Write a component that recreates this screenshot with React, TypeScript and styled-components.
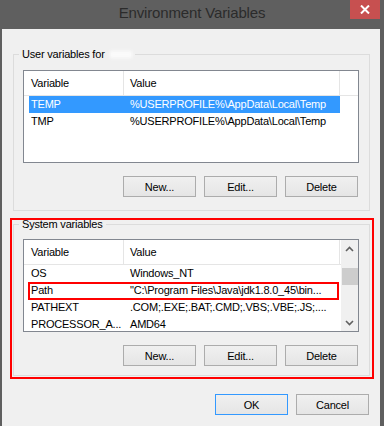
import React from "react";
import styled, { createGlobalStyle } from "styled-components";

const GlobalStyle = createGlobalStyle`
  html, body {
    margin: 0;
    padding: 0;
    width: 384px;
    height: 426px;
    overflow: hidden;
    background: #5f5f5f;
  }
  * { box-sizing: border-box; }
`;

const Window = styled.div`
  width: 384px;
  height: 426px;
  display: flex;
  flex-direction: column;
  background: #5f5f5f;
  font-family: "Liberation Sans", Arial, sans-serif;
  font-size: 11px;
  letter-spacing: -0.2px;
  color: #000;
`;

const TitleBar = styled.div`
  height: 29px;
  flex: none;
  display: grid;
  grid-template-columns: 1fr auto 1fr;
  align-items: start;
`;

const Title = styled.div`
  grid-column: 2;
  font-size: 15px;
  line-height: 26px;
  color: #2b2b2b;
  letter-spacing: -0.15px;
  white-space: nowrap;
`;

const CloseButton = styled.div`
  grid-column: 3;
  justify-self: end;
  margin-right: 4px;
  width: 30px;
  height: 19px;
  background: #c75050;
  display: flex;
  align-items: center;
  justify-content: center;
`;

const Client = styled.div`
  flex: 1;
  margin: 0 4px 0 2px;
  background: #f0f0f0;
  padding: 25px 10px 0 11px;
  display: flex;
  flex-direction: column;
`;

const Group = styled.div<{ $pt: number; $pb: number }>`
  position: relative;
  border: 1px solid #dcdcdc;
  padding: ${(p) => p.$pt}px 10px ${(p) => p.$pb}px 9px;
  display: flex;
  flex-direction: column;
  gap: 13px;
  & + & {
    margin-top: 13px;
  }
`;

const Legend = styled.span`
  position: absolute;
  top: -8px;
  left: 5px;
  padding: 0 3px;
  background: #f0f0f0;
  line-height: 14px;
  white-space: nowrap;
  display: flex;
  align-items: center;
`;

const Blurred = styled.span`
  display: inline-block;
  width: 22px;
  height: 7px;
  margin-left: 5px;
  margin-top: 1px;
  background: #fdfdfd;
  filter: blur(1.5px);
  opacity: 0.85;
`;

const Highlight = styled.div`
  position: absolute;
  top: -7px;
  left: -4px;
  right: -5px;
  bottom: -4px;
  border: 2px solid #ff0000;
  pointer-events: none;
`;

const ListView = styled.div`
  height: 93px;
  border: 1px solid #828790;
  background: #fff;
  display: flex;
  overflow: hidden;
`;

const ListBody = styled.div`
  flex: 1;
  min-width: 0;
  display: flex;
  flex-direction: column;
`;

const Header = styled.div`
  height: 25px;
  flex: none;
  display: flex;
  border-bottom: 1px solid #e5e5e5;
`;

const HeaderCell = styled.div<{ $w: number; $pl: number }>`
  width: ${(p) => p.$w}px;
  padding-left: ${(p) => p.$pl}px;
  border-right: 1px solid #e5e5e5;
  line-height: 24px;
  white-space: nowrap;
`;

const Row = styled.div<{ $selected?: boolean }>`
  position: relative;
  margin-left: 5px;
  width: 311px;
  height: 17px;
  flex: none;
  display: grid;
  grid-template-columns: 94px 217px;
  line-height: 17px;
  background: ${(p) => (p.$selected ? "#3399ff" : "transparent")};
  color: ${(p) => (p.$selected ? "#fff" : "#000")};
`;

const Cell = styled.div<{ $pl: number }>`
  padding-left: ${(p) => p.$pl}px;
  white-space: nowrap;
  overflow: hidden;
`;

const RowMark = styled.div`
  position: absolute;
  top: 0;
  left: -1px;
  right: 1px;
  bottom: -1px;
  border: 2px solid #ff0000;
  pointer-events: none;
`;

const ScrollBar = styled.div`
  width: 17px;
  flex: none;
  background: #f0f0f0;
  display: flex;
  flex-direction: column;
`;

const ScrollArrow = styled.div`
  height: 17px;
  flex: none;
  display: flex;
  align-items: center;
  justify-content: center;
`;

const ScrollTrack = styled.div`
  flex: 1;
  display: flex;
  flex-direction: column;
  align-items: center;
`;

const Thumb = styled.div`
  margin-top: 11px;
  width: 16px;
  height: 17px;
  background: #cdcdcd;
`;

const ButtonRow = styled.div<{ $mt?: number }>`
  display: flex;
  justify-content: flex-end;
  gap: 8px;
  padding-right: 1px;
  margin-top: ${(p) => p.$mt ?? 0}px;
`;

const Button = styled.button<{ $default?: boolean }>`
  width: 73px;
  height: 21px;
  padding: 0;
  border: 1px solid ${(p) => (p.$default ? "#3399ff" : "#acacac")};
  background: linear-gradient(#f0f0f0, #e5e5e5);
  font-family: inherit;
  font-size: 11px;
  letter-spacing: -0.2px;
  color: #000;
`;

type Item = { name: string; value: string; selected?: boolean; marked?: boolean };

const userVars: Item[] = [
  { name: "TEMP", value: "%USERPROFILE%\\AppData\\Local\\Temp", selected: true },
  { name: "TMP", value: "%USERPROFILE%\\AppData\\Local\\Temp" },
];

const sysVars: Item[] = [
  { name: "OS", value: "Windows_NT" },
  { name: "Path", value: "\"C:\\Program Files\\Java\\jdk1.8.0_45\\bin...", marked: true },
  { name: "PATHEXT", value: ".COM;.EXE;.BAT;.CMD;.VBS;.VBE;.JS;...." },
  { name: "PROCESSOR_A...", value: "AMD64" },
];

const Chevron = ({ up }: { up: boolean }) => (
  <svg width="9" height="6" viewBox="0 0 9 6">
    <path
      d={up ? "M1 5 L4.5 1.5 L8 5" : "M1 1 L4.5 4.5 L8 1"}
      fill="none"
      stroke="#606060"
      strokeWidth="1.6"
    />
  </svg>
);

const List = ({ items, scroll }: { items: Item[]; scroll?: boolean }) => (
  <ListView>
    <ListBody>
      <Header>
        <HeaderCell $w={100} $pl={7}>Variable</HeaderCell>
        <HeaderCell $w={216} $pl={6}>Value</HeaderCell>
      </Header>
      {items.map((it) => (
        <Row key={it.name} $selected={it.selected}>
          <Cell $pl={2}>{it.name}</Cell>
          <Cell $pl={7}>{it.value}</Cell>
          {it.marked && <RowMark />}
        </Row>
      ))}
    </ListBody>
    {scroll && (
      <ScrollBar>
        <ScrollArrow>
          <Chevron up />
        </ScrollArrow>
        <ScrollTrack>
          <Thumb />
        </ScrollTrack>
        <ScrollArrow>
          <Chevron up={false} />
        </ScrollArrow>
      </ScrollBar>
    )}
  </ListView>
);

const Buttons = () => (
  <ButtonRow>
    <Button>New...</Button>
    <Button>Edit...</Button>
    <Button>Delete</Button>
  </ButtonRow>
);

export default function App() {
  return (
    <>
      <GlobalStyle />
      <Window>
        <TitleBar>
          <Title>Environment Variables</Title>
          <CloseButton>
            <svg width="10" height="9" viewBox="0 0 10 9">
              <path d="M1 0.5 L9 8.5 M9 0.5 L1 8.5" stroke="#fff" strokeWidth="2" />
            </svg>
          </CloseButton>
        </TitleBar>
        <Client>
          <Group $pt={15} $pb={13}>
            <Legend>
              User variables for
              <Blurred />
            </Legend>
            <List items={userVars} />
            <Buttons />
          </Group>
          <Group $pt={14} $pb={9}>
            <Legend>System variables</Legend>
            <List items={sysVars} scroll />
            <Buttons />
            <Highlight />
          </Group>
          <ButtonRow $mt={18}>
            <Button $default>OK</Button>
            <Button>Cancel</Button>
          </ButtonRow>
        </Client>
      </Window>
    </>
  );
}
